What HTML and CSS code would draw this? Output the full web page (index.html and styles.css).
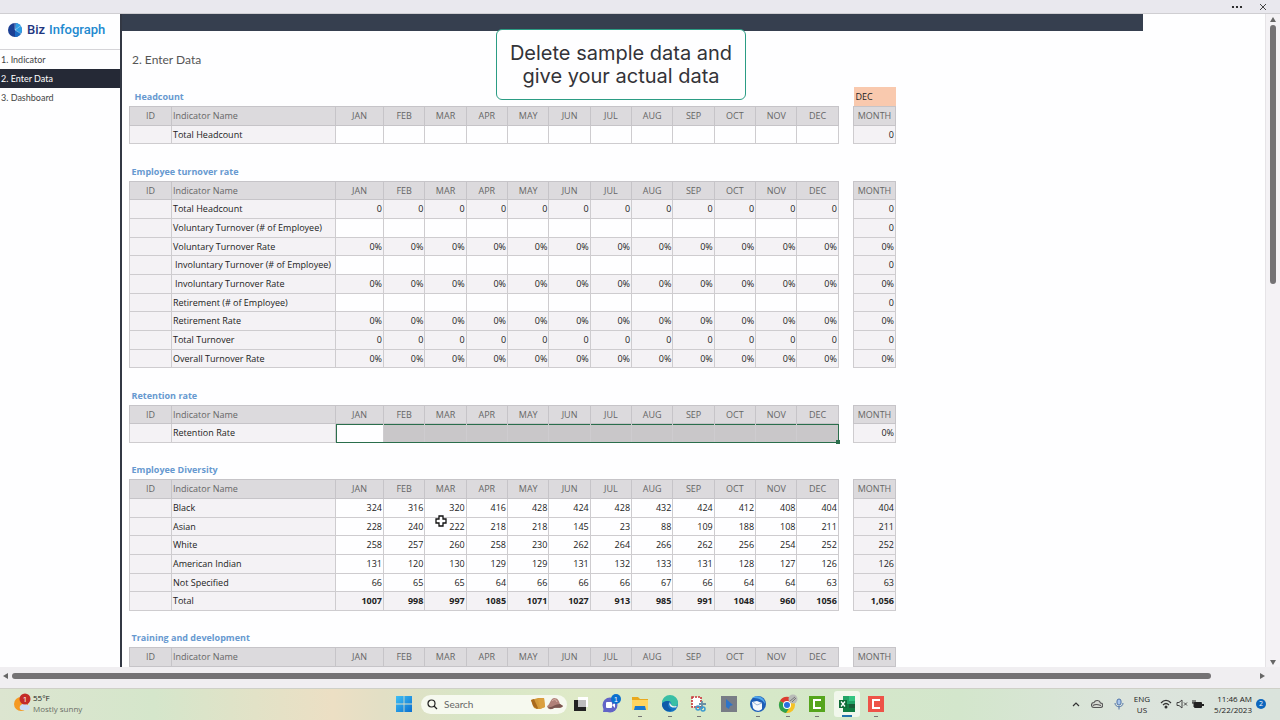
FILE: index.html
```
<!DOCTYPE html>
<html lang="en">
<head>
    <meta charset="UTF-8">
    <meta name="viewport" content="width=device-width, initial-scale=1.0">
    <title>Biz Infograph - Enter Data</title>
    <link rel="stylesheet" href="styles.css">
</head>
<body>

<header class="titlebar">
    <button type="button" aria-label="More">
        <svg width="12" height="4" viewBox="0 0 12 4"><circle cx="2" cy="2" r="1.1"/><circle cx="6" cy="2" r="1.1"/><circle cx="10" cy="2" r="1.1"/></svg>
    </button>
    <button type="button" aria-label="Close">
        <svg width="8" height="8" viewBox="0 0 8 8"><path d="M1 1l6 6M7 1L1 7" stroke="#444" fill="none"/></svg>
    </button>
</header>

<div class="workspace">
    <nav class="sidebar">
        <div class="logo">
            <svg width="16" height="16" viewBox="0 0 16 16">
                <circle cx="8" cy="8" r="7" fill="#1b3f94"/>
                <path d="M8 8L9 1a7 7 0 0 1 5 10.600z" fill="#2f9fe6"/>
                <path d="M8 8l6 3.600A7 7 0 0 1 8 15z" fill="#1769c4"/>
                <path d="M8 8L8 .5M8 8l6.500 4M8 8l6-4.500" stroke="#cfe6fa" stroke-width=".5"/>
            </svg>
            <span class="logo-biz">Biz</span>
            <span class="logo-info">Infograph</span>
        </div>
        <ul>
            <li><a href="#indicator">1. Indicator</a></li>
            <li><a href="#enter-data" class="active">2. Enter Data</a></li>
            <li><a href="#dashboard">3. Dashboard</a></li>
        </ul>
    </nav>

    <main class="content">
        <div class="banner"></div>
        <h1>2. Enter Data</h1>
        <table class="sheet">
            <colgroup>
                <col class="col-id"><col class="col-name"><col class="col-jan">
                <col span="11">
                <col class="col-gap"><col class="col-month">
            </colgroup>
            <tbody id="sheet-rows"></tbody>
        </table>
        <div class="callout">Delete sample data and<br>give your actual data</div>
        <svg class="cursor" width="12" height="12" viewBox="0 0 12 12"><path d="M4 1h4v3h3v4H8v3H4V8H1V4h3z" fill="#fff" stroke="#111" stroke-width="1.300"/></svg>
    </main>

    <div class="scroll-y">
        <svg width="8" height="6" viewBox="0 0 8 6"><path d="M4 0l3 5H1z"/></svg>
        <div class="thumb"></div>
        <svg class="down" width="8" height="6" viewBox="0 0 8 6"><path d="M4 6L1 1h6z"/></svg>
    </div>
</div>

<div class="scroll-x">
    <svg width="6" height="8" viewBox="0 0 6 8"><path d="M0 4l5-3v6z"/></svg>
    <div class="thumb"></div>
    <svg class="right" width="6" height="8" viewBox="0 0 6 8"><path d="M6 4L1 1v6z"/></svg>
</div>

<footer class="taskbar">
    <div class="weather">
        <svg width="18" height="20" viewBox="0 0 18 20">
            <circle cx="8" cy="11" r="7" fill="#f59a23"/>
            <path d="M8 17a3 3 0 0 1 0-5 4 4 0 0 1 6.500 0A2.500 2.500 0 0 1 14 17z" fill="#c9dcf6"/>
            <circle cx="12" cy="6" r="5.500" fill="#c42b28"/>
            <text x="12" y="9" font-size="8" fill="#fff" text-anchor="middle">1</text>
        </svg>
        <div><b>55°F</b><span>Mostly sunny</span></div>
    </div>

    <div class="task-center">
        <button type="button" aria-label="Start">
            <svg width="16" height="16" viewBox="0 0 16 16">
                <defs><linearGradient id="win" x2="1" y2="1"><stop stop-color="#3fc0f5"/><stop offset="1" stop-color="#0a6fd0"/></linearGradient></defs>
                <path d="M0 0h7.600v7.600H0zM8.400 0H16v7.600H8.400zM0 8.400h7.600V16H0zM8.400 8.400H16V16H8.400z" fill="url(#win)"/>
            </svg>
        </button>
        <label class="search">
            <svg width="11" height="11" viewBox="0 0 11 11"><circle cx="4.500" cy="4.500" r="3.500" fill="none" stroke="#222" stroke-width="1.200"/><path d="M7 7l3 3" stroke="#222" stroke-width="1.300"/></svg>
            <input type="text" placeholder="Search" aria-label="Search">
            <svg width="34" height="14" viewBox="0 0 34 14">
                <path d="M1 3l7-2 6 0 1 9-5 2-3 0-3-1z" fill="#d39a3a"/>
                <path d="M1 3l3-1 4 9-1 1-4-3z" fill="#a96a1e"/>
                <path d="M8 2l6-1 1 9-5 2z" fill="#dba03f"/>
                <path d="M17 9c3-1 3-7 7-8 4 0 5 3 6 6l3 2c-2 3-6 1-9 2-3 2-6 2-7-2z" fill="#b08078"/>
                <path d="M18 10c4 1 7-3 12-3l3 2c-3 3-6 1-9 2-2 1-4 2-6-1z" fill="#7b5650"/>
                <path d="M22 4c2-2 4-2 5 1" stroke="#dbb6aa" fill="none"/>
            </svg>
        </label>
        <div class="apps">
            <button type="button" aria-label="Task View">
                <svg width="18" height="18" viewBox="0 0 18 18"><path d="M6 2h10v10H6z" fill="#fff"/><path d="M2 5h4v7h8v4H2z" fill="#222"/><path d="M6 5h8v7H6z" fill="#bdbdbd"/></svg>
            </button>
            <button type="button" aria-label="Chat">
                <svg width="20" height="20" viewBox="0 0 20 20"><circle cx="9" cy="11" r="7.500" fill="#6264c7"/><path d="M2 18l1-6 5 6z" fill="#6264c7"/><rect x="5" y="8" width="6" height="6" rx="1" fill="#fff"/><path d="M11 11l3-2v5z" fill="#fff"/><circle cx="15" cy="5" r="5" fill="#0b70cf"/><text x="15" y="8" font-size="7" fill="#fff" text-anchor="middle">1</text></svg>
            </button>
            <button type="button" class="open" aria-label="File Explorer">
                <svg width="18" height="18" viewBox="0 0 18 18"><path d="M1 2h6l2 2h8v11H1z" fill="#e9a91f"/><path d="M1 5h16v10H1z" fill="#ffd561"/><path d="M4 11h10l1 4H3z" fill="#1a78cf"/></svg>
            </button>
            <button type="button" class="open" aria-label="Edge">
                <svg width="18" height="18" viewBox="0 0 18 18"><circle cx="9" cy="9" r="8" fill="#1573c4"/><path d="M1 8a8 8 0 0 1 16 0c0 4-5 4-7 2 1-3-1-4-3-4-3 0-5 1-6 2z" fill="#39bfa5"/><path d="M1 9c2-3 6-4 8-2-3 1-3 6 2 8-5 3-10-1-10-6z" fill="#0d5ba9"/><path d="M9 7c-2 3 1 7 7 5l-1-1c-3 1-6-1-6-4z" fill="#eef8ee"/></svg>
            </button>
            <button type="button" class="open" aria-label="Snipping Tool">
                <svg width="18" height="18" viewBox="0 0 18 18"><rect x="2" y="2" width="9" height="10" fill="#fff" stroke="#c93237" stroke-width="1.600" stroke-dasharray="2 1"/><path d="M9 9h7M12 6v8" stroke="#6b8fa5" stroke-width="1.800"/><circle cx="8" cy="13" r="2" fill="none" stroke="#3b9ad0" stroke-width="1.500"/><circle cx="13" cy="14" r="2" fill="none" stroke="#3b9ad0" stroke-width="1.500"/></svg>
            </button>
            <button type="button" aria-label="Pointer">
                <svg width="18" height="18" viewBox="0 0 18 18"><path d="M1 1h16v16H1z" fill="#787d86"/><path d="M6 4l7 6-3 1-1 3-3-2z" fill="#2d74c8"/></svg>
            </button>
            <button type="button" class="open" aria-label="Thunderbird">
                <svg width="18" height="18" viewBox="0 0 18 18"><circle cx="9" cy="9" r="8" fill="#1d5eb8"/><path d="M3 3c5-4 13-1 13 6-2-4-6-6-13-6z" fill="#51a8ec"/><path d="M3 7l5-1 5 2v6c-3 3-7 2-9-1z" fill="#f6f8fd"/><path d="M4 7l4 3 5-2" stroke="#9ab4d8" fill="none"/></svg>
            </button>
            <button type="button" class="open" aria-label="Chrome">
                <svg width="20" height="20" viewBox="0 0 20 20"><circle cx="9" cy="11" r="8" fill="#f5c324"/><path d="M9 11L2 7a8 8 0 0 1 14 0z" fill="#dc3d32"/><path d="M9 11L2 7a8 8 0 0 0 6 12l4-6z" fill="#2da250"/><circle cx="9" cy="11" r="4" fill="#fff"/><circle cx="9" cy="11" r="3" fill="#2a70e0"/><circle cx="15" cy="5" r="4.500" fill="#b9bcb8"/><path d="M12 7l5-4M14 8l4-4" stroke="#777" fill="none"/></svg>
            </button>
            <button type="button" class="open" aria-label="Camtasia">
                <svg width="18" height="18" viewBox="0 0 18 18"><path d="M1 1h16v16H1z" fill="#55a51c"/><path d="M13 5H6v8h7" stroke="#fff" stroke-width="2" fill="none"/></svg>
            </button>
            <button type="button" class="open current" aria-label="Excel">
                <svg width="18" height="18" viewBox="0 0 18 18"><path d="M5 1h12v16H5z" fill="#21a366"/><path d="M11 1h6v5h-6z" fill="#33c481"/><path d="M5 9h12v8H5z" fill="#107c41"/><path d="M11 9h6v4h-6z" fill="#185c37"/><path d="M1 5h8v8H1z" fill="#0f6b37"/><path d="M3 6.500l4 5M7 6.500l-4 5" stroke="#fff" stroke-width="1.300"/></svg>
            </button>
            <button type="button" class="open" aria-label="Recorder">
                <svg width="18" height="18" viewBox="0 0 18 18"><path d="M1 1h16v16H1z" fill="#ee5348"/><path d="M13 5H6v8h7" stroke="#fff" stroke-width="2" fill="none"/></svg>
            </button>
        </div>
    </div>

    <div class="tray">
        <svg width="8" height="6" viewBox="0 0 8 6"><path d="M1 5l3-3 3 3" stroke="#333" stroke-width="1.200" fill="none"/></svg>
        <svg class="cloud" width="12" height="10" viewBox="0 0 12 10"><path d="M3 8.500a2.500 2.500 0 0 1 0-5 3.500 3.500 0 0 1 6.500.5 2.200 2.200 0 0 1 0 4.500zM2 6.500c3-2 5-1 8 0" stroke="#555" stroke-width="1.100" fill="#d5d8d2"/></svg>
        <svg class="mic" width="10" height="12" viewBox="0 0 10 12"><rect x="3" y="1" width="4" height="6" rx="2" fill="#a9c5ec" stroke="#4f73a8"/><path d="M1 5c0 5 8 5 8 0M5 9v2.500" stroke="#4f73a8" fill="none"/></svg>
        <div class="lang">ENG<br>US</div>
        <svg width="12" height="10" viewBox="0 0 12 10"><path d="M1 4c3-3.500 7-3.500 10 0M3 6c2-2 4-2 6 0" stroke="#333" stroke-width="1.200" fill="none"/><circle cx="6" cy="8" r="1.500" fill="#333"/></svg>
        <svg width="12" height="10" viewBox="0 0 12 10"><path d="M1 3.500h2l3-2.500v8L3 6.500H1zM8 3.500l3 3M11 3.500l-3 3" stroke="#444" fill="none"/></svg>
        <svg width="12" height="10" viewBox="0 0 12 10"><rect x="2" y="3" width="8" height="6" rx="1" fill="#222"/><path d="M10 5h2v2h-2z" fill="#222"/><path d="M0 4h4M1 1v3M3 1v3M2 4v4" stroke="#222"/></svg>
        <div class="clock">11:46 AM<br>5/22/2023</div>
        <span class="badge">2</span>
    </div>
</footer>

<script src="sheet.js"></script>
</body>
</html>
```
FILE: styles.css
```
* {
    box-sizing:border-box;
}

body {
    margin:0;
    height:100vh;
    display:flex;
    flex-direction:column;
    overflow:hidden;
    font-family:Lato, "Liberation Sans", sans-serif;
    font-size:9px;
    color:#222;
    background:#efedf0;
}

button {
    padding:0;
    border:none;
    background:none;
    cursor:pointer;
}

svg {
    display:block;
}

.titlebar {
    flex:none;
    height:14px;
    display:flex;
    justify-content:flex-end;
    align-items:center;
    gap:16px;
    padding-right:13px;
    background:#e9e8ee;
    border-bottom:1px solid #cfced2;
}

/* sidebar + sheet + vertical scrollbar */
.workspace {
    flex:1;
    min-height:0;
    display:flex;
}

.sidebar {
    width:122px;
    flex:none;
    background:#fefeff;
    border-right:2px solid #333844;
}

.logo {
    height:36px;
    display:flex;
    align-items:center;
    padding:0 0 4px 7px;
    border-bottom:1px solid #d5d4d8;
    font-family:Roboto, sans-serif;
    font-size:13px;
    font-weight:500;
}

.logo-biz {
    margin:0 4px;
    color:#20357f;
}

.logo-info {
    color:#2189cf;
}

.sidebar ul {
    list-style:none;
    margin:0;
    padding:0;
}

.sidebar a {
    display:block;
    padding-left:1px;
    line-height:19px;
    color:#444;
    text-decoration:none;
}

.sidebar a.active {
    background:#252936;
    color:#fff;
}

.content {
    position:relative;
    flex:1;
    min-width:0;
    overflow:hidden;
    background:#fefeff;
}

.banner {
    height:17px;
    margin-right:122px;
    background:#363f4f;
}

h1 {
    margin:20px 0 18px 10px;
    font-size:12px;
    font-weight:normal;
    line-height:18px;
    color:#555;
}

.sheet {
    width:767px;
    margin-left:7px;
    table-layout:fixed;
    border-collapse:collapse;
    font-family:"Open Sans", sans-serif;
}

.col-id,
.col-month {
    width:42px;
}

.col-name {
    width:164px;
}

.col-jan {
    width:48px;
}

.col-gap {
    width:15px;
}

.sheet th,
.sheet td {
    height:19px;
    padding:1px 1px 0;
    line-height:14px;
    white-space:nowrap;
    font-weight:normal;
    text-align:right;
}

.sheet tr:nth-child(3n) > * {
    height:18px;
}

.sheet .cell {
    border:1px solid #cecccf;
    background:#f4f2f5;
}

.sheet .head {
    border:1px solid #c6c4c8;
    background:#dcdadd;
    color:#666;
    text-align:center;
}

.sheet .name {
    text-align:left;
}

.sheet .entry {
    background:#fefeff;
}

.sheet .indent {
    padding-left:3px;
}

.sheet .total {
    font-weight:bold;
}

.sheet .section {
    padding-left:2px;
    text-align:left;
    font-weight:bold;
    color:#6799d0;
}

.sheet .section.first {
    padding-left:5px;
}

.sheet .month-pick {
    padding-left:2px;
    text-align:left;
    background:#f9c9ae;
}

/* selected range */
.sheet .selected {
    position:relative;
    background:#c9c7c9;
    border-bottom-color:#2a6e4c;
    box-shadow:inset 0 1px #2a6e4c;
}

.sheet .selected.start {
    background:#fefeff;
    box-shadow:inset 1px 1px #2a6e4c;
}

.sheet .selected.end {
    border-right-color:#2a6e4c;
}

.sheet .selected.end::after {
    content:"";
    position:absolute;
    right:-2px;
    bottom:-2px;
    width:4px;
    height:4px;
    background:#2a6e4c;
}

.callout {
    position:absolute;
    left:374px;
    top:15px;
    width:250px;
    padding:12px 0 11px;
    border:1px solid #2b9c84;
    border-radius:6px;
    background:#fefeff;
    color:#333338;
    font-family:Inter, sans-serif;
    font-size:20px;
    line-height:23px;
    text-align:center;
}

.cursor {
    position:absolute;
    left:313px;
    top:501px;
}

.scroll-y {
    width:15px;
    flex:none;
    display:flex;
    flex-direction:column;
    align-items:center;
    padding:3px 0 2px;
    background:#f4f2f5;
    border-left:1px solid #e6e4e7;
}

.scroll-y .thumb {
    width:6px;
    height:40%;
    margin-top:2px;
    border-radius:3px;
    background:#747274;
}

.scroll-y .down {
    margin-top:auto;
}

.scroll-x {
    flex:none;
    height:21px;
    display:flex;
    align-items:center;
    padding:0 15px 3px 3px;
    background:#f0eef1;
    fill:#666;
}

.scroll-y svg {
    fill:#666;
}

.scroll-x .thumb {
    width:95%;
    height:6px;
    margin-left:3px;
    border-radius:3px;
    background:#747274;
}

.scroll-x .right {
    margin-left:auto;
}

.taskbar {
    flex:none;
    height:32px;
    display:grid;
    grid-template-columns:1fr auto 1fr;
    align-items:center;
    padding:0 8px 0 13px;
    border-top:1px solid #cfd0c8;
    background:linear-gradient(90deg, #dce5d0 0%, #d5e6cb 12%, #ecdfc4 26%, #e2dfc5 30%, #d7e6c6 37%, #dfeac8 45%, #d6e8c8 60%, #d3e6cc 75%, #dce4dc 88%, #dae3dc 100%);
    font-family:"Open Sans", sans-serif;
    font-size:8px;
    line-height:11px;
}

.weather {
    display:flex;
    align-items:center;
    gap:2px;
    padding-bottom:3px;
}

.weather b,
.weather span {
    display:block;
    font-weight:normal;
}

.weather span {
    color:#6a6e66;
}

.task-center {
    display:flex;
    align-items:center;
    padding-bottom:1px;
}

.search {
    width:146px;
    height:19px;
    margin:0 1px 0 9px;
    padding:0 3px 0 6px;
    display:flex;
    align-items:center;
    border-radius:10px;
    background:#f6f9ef;
}

.search input {
    flex:1;
    min-width:0;
    padding:0 0 0 6px;
    border:none;
    background:none;
    font-family:Lato, sans-serif;
    font-size:10px;
}

.search input::placeholder {
    color:#666;
}

.apps {
    width:321px;
    display:flex;
    justify-content:space-between;
}

.apps button {
    position:relative;
    width:26px;
    height:26px;
    display:flex;
    align-items:center;
    justify-content:center;
    border-radius:3px;
}

.apps .open::after {
    content:"";
    position:absolute;
    bottom:0;
    width:4px;
    height:1px;
    background:#777;
}

.apps .current {
    background:#f1f7ec;
}

.apps .current::after {
    width:10px;
    height:2px;
    background:#2272ad;
}

.tray {
    display:flex;
    align-items:center;
    justify-content:flex-end;
    gap:4px;
    padding:0 6px 2px 0;
}

.tray .cloud,
.tray .mic {
    margin-left:7px;
}

.lang {
    margin:0 6px;
    text-align:center;
}

.clock {
    margin-left:6px;
    text-align:right;
}

.badge {
    width:10px;
    height:10px;
    border-radius:50%;
    background:#0d66bd;
    color:#fff;
    font-size:7px;
    line-height:10px;
    text-align:center;
}
```
FILE: sheet.js
```
const months = ['JAN', 'FEB', 'MAR', 'APR', 'MAY', 'JUN', 'JUL', 'AUG', 'SEP', 'OCT', 'NOV', 'DEC'];
const zeros = Array(12).fill('0');
const percents = Array(12).fill('0%');

// values: null = empty input cells, 'selected' = the selected range
const sections = [
    { title: 'Headcount', rows: [
        { name: 'Total Headcount', values: null, month: '0' }
    ]},
    { title: 'Employee turnover rate', rows: [
        { name: 'Total Headcount', values: zeros, month: '0' },
        { name: 'Voluntary Turnover (# of Employee)', values: null, month: '0' },
        { name: 'Voluntary Turnover Rate', values: percents, month: '0%' },
        { name: 'Involuntary Turnover (# of Employee)', values: null, month: '0', indent: true },
        { name: 'Involuntary Turnover Rate', values: percents, month: '0%', indent: true },
        { name: 'Retirement (# of Employee)', values: null, month: '0' },
        { name: 'Retirement Rate', values: percents, month: '0%' },
        { name: 'Total Turnover', values: zeros, month: '0' },
        { name: 'Overall Turnover Rate', values: percents, month: '0%' }
    ]},
    { title: 'Retention rate', rows: [
        { name: 'Retention Rate', values: 'selected', month: '0%' }
    ]},
    { title: 'Employee Diversity', rows: [
        { name: 'Black', entry: true, values: [324, 316, 320, 416, 428, 424, 428, 432, 424, 412, 408, 404], month: '404' },
        { name: 'Asian', entry: true, values: [228, 240, 222, 218, 218, 145, 23, 88, 109, 188, 108, 211], month: '211' },
        { name: 'White', entry: true, values: [258, 257, 260, 258, 230, 262, 264, 266, 262, 256, 254, 252], month: '252' },
        { name: 'American Indian', entry: true, values: [131, 120, 130, 129, 129, 131, 132, 133, 131, 128, 127, 126], month: '126' },
        { name: 'Not Specified', entry: true, values: [66, 65, 65, 64, 66, 66, 66, 67, 66, 64, 64, 63], month: '63' },
        { name: 'Total', total: true, values: [1007, 998, 997, 1085, 1071, 1027, 913, 985, 991, 1048, 960, 1056], month: '1,056' }
    ]},
    { title: 'Training and development', rows: [] }
];

function valueCells(row) {
    return months.map((m, i) => {
        if (row.values === 'selected') {
            const edge = i === 0 ? ' start' : i === 11 ? ' end' : '';
            return `<td class="cell selected${edge}"></td>`;
        }
        if (!row.values) {
            return '<td class="cell entry"></td>';
        }
        return `<td class="cell${row.entry ? ' entry' : ''}${row.total ? ' total' : ''}">${row.values[i]}</td>`;
    }).join('');
}

let html = '';
sections.forEach((section, i) => {
    if (i > 0) {
        html += '<tr><td colspan="16"></td></tr>';
    }
    html += `<tr><th class="section${i === 0 ? ' first' : ''}" colspan="2">${section.title}</th><td colspan="13"></td>`
        + (i === 0 ? '<td class="month-pick">DEC</td>' : '<td></td>') + '</tr>';
    html += '<tr><th class="head">ID</th><th class="head name">Indicator Name</th>'
        + months.map(m => `<th class="head">${m}</th>`).join('')
        + '<td></td><th class="head">MONTH</th></tr>';
    section.rows.forEach(row => {
        html += `<tr><td class="cell"></td><th class="cell name${row.indent ? ' indent' : ''}">${row.name}</th>`
            + valueCells(row)
            + `<td></td><td class="cell${row.total ? ' total' : ''}">${row.month}</td></tr>`;
    });
});
document.getElementById('sheet-rows').innerHTML = html;
```
